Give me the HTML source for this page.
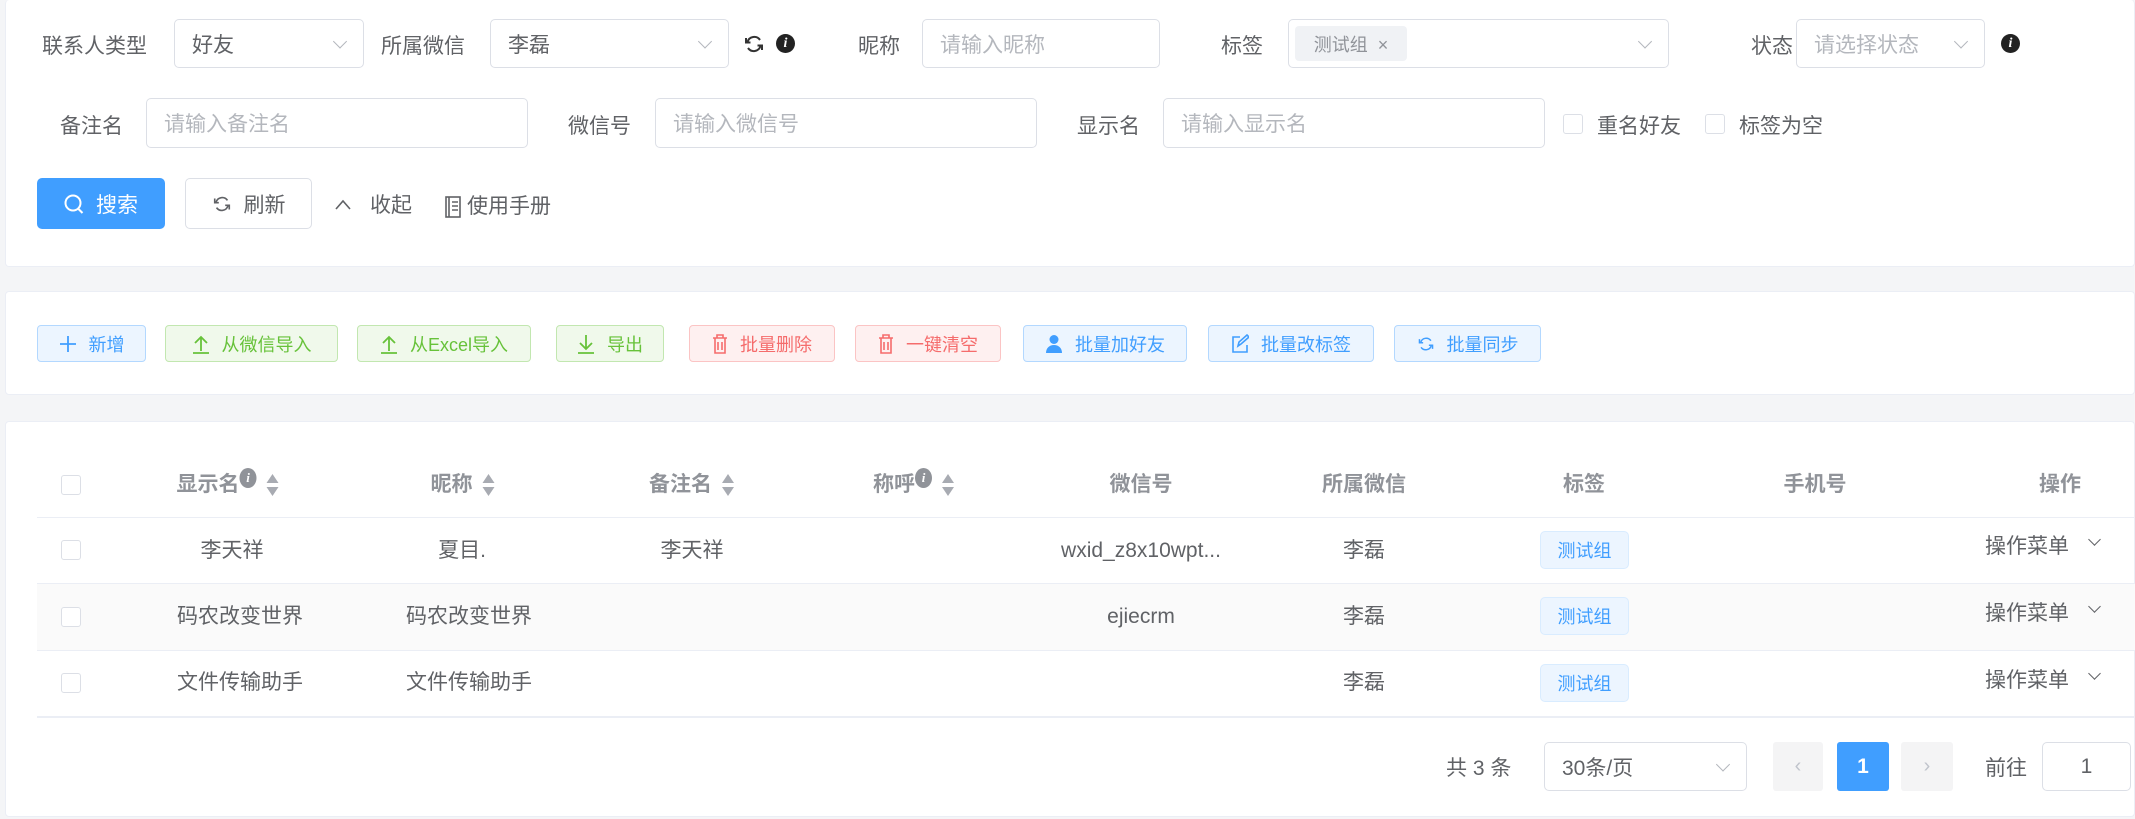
<!DOCTYPE html>
<html><head><meta charset="utf-8"><style>
*{box-sizing:border-box;margin:0;padding:0}
body{width:2135px;height:819px;background:#f4f5f7;font-family:"Liberation Sans","Noto Sans CJK SC",sans-serif;color:#606266;position:relative;overflow:hidden;font-size:20px}
.a{position:absolute}
.panel{position:absolute;background:#fff;left:5px;right:0;border:1px solid #ebeef5;border-radius:4px}
.lbl{position:absolute;font-size:21px;color:#606266;line-height:24px}
.inp{position:absolute;border:1px solid #dcdfe6;border-radius:5px;background:#fff;font-size:21px;color:#606266;padding-left:17px;display:flex;align-items:center}
.ph{color:#b4b7bd}
.chev{position:absolute;right:18px;top:50%;width:10px;height:10px;border-right:1.5px solid #b4b7bd;border-bottom:1.5px solid #b4b7bd;transform:translateY(-75%) rotate(45deg)}
.btn{position:absolute;top:325px;height:37px;border:1px solid;border-radius:4px;font-size:18px;display:flex;align-items:center;justify-content:center;gap:12px}
.pri{background:#ecf5ff;border-color:#b3d8ff;color:#409eff}
.suc{background:#f0f9eb;border-color:#c2e7b0;color:#67c23a}
.dan{background:#fef0f0;border-color:#fbc4c4;color:#f56c6c}
.cb{position:absolute;width:20px;height:20px;border:1px solid #dcdfe6;border-radius:3px;background:#fff}
.th{position:absolute;font-weight:bold;color:#909399;font-size:21px;transform:translateX(-50%);white-space:nowrap;top:472px;line-height:26px}
.td{position:absolute;font-size:21px;color:#606266;transform:translateX(-50%);white-space:nowrap;line-height:26px}
.line{position:absolute;left:37px;right:0;height:1px;background:#ebeef5}
.tag{position:absolute;left:1540px;width:89px;height:38px;background:#ecf5ff;border:1px solid #d9ecff;border-radius:5px;color:#409eff;font-size:18px;display:flex;align-items:center;justify-content:center}
.sort{display:inline-block;vertical-align:middle;margin-left:9px;width:14px;height:24px;position:relative}
.sort:before{content:"";position:absolute;left:1px;top:1px;border:6px solid transparent;border-bottom:9px solid #a8abb2;border-top:0}
.sort:after{content:"";position:absolute;left:1px;bottom:1px;border:6px solid transparent;border-top:9px solid #a8abb2;border-bottom:0}
.info{display:inline-block;width:19px;height:19px;border-radius:50%;background:#222;color:#fff;font:italic bold 14px "Liberation Serif",serif;text-align:center;line-height:19px}
.hinfo{display:inline-block;width:17px;height:20px;border-radius:50%;background:#909399;color:#fff;font:italic bold 13px "Liberation Serif",serif;text-align:center;line-height:20px;vertical-align:top;margin-top:-4px}
.op{position:absolute;left:1985px;font-size:21px;color:#606266}
.opc{position:absolute;left:2090px;width:9px;height:9px;border-right:1.5px solid #606266;border-bottom:1.5px solid #606266;transform:rotate(45deg)}
</style></head><body>

<div class="panel" style="top:0;height:267px;border-top:none"></div>
<div class="lbl" style="left:42px;top:35px">联系人类型</div>
<div class="inp" style="left:174px;top:19px;width:190px;height:49px">好友<span class="chev"></span></div>
<div class="lbl" style="left:381px;top:35px">所属微信</div>
<div class="inp" style="left:490px;top:19px;width:239px;height:49px">李磊<span class="chev"></span></div>
<svg class="a" style="left:743px;top:33px" width="22" height="22" viewBox="0 0 22 22" fill="none" stroke="#333" stroke-width="2"><path d="M17 7A7 7 0 0 0 4.5 9M5 15a7 7 0 0 0 12.5-2"/><path d="M3 5v4.5h4.5M19 17v-4.5h-4.5"/></svg>
<span class="info a" style="left:776px;top:34px">i</span>
<div class="lbl" style="left:858px;top:35px">昵称</div>
<div class="inp" style="left:922px;top:19px;width:238px;height:49px"><span class="ph">请输入昵称</span></div>
<div class="lbl" style="left:1221px;top:35px">标签</div>
<div class="inp" style="left:1288px;top:19px;width:381px;height:49px;padding-left:6px"><span style="background:#f0f2f5;color:#909399;font-size:18px;height:35px;width:112px;display:flex;align-items:center;justify-content:center;border-radius:4px">测试组&nbsp;&nbsp;×</span><span class="chev"></span></div>
<div class="lbl" style="left:1751px;top:35px">状态</div>
<div class="inp" style="left:1796px;top:19px;width:189px;height:49px"><span class="ph">请选择状态</span><span class="chev"></span></div>
<span class="info a" style="left:2001px;top:34px">i</span>

<div class="lbl" style="left:60px;top:115px">备注名</div>
<div class="inp" style="left:146px;top:98px;width:382px;height:50px"><span class="ph">请输入备注名</span></div>
<div class="lbl" style="left:568px;top:115px">微信号</div>
<div class="inp" style="left:655px;top:98px;width:382px;height:50px"><span class="ph">请输入微信号</span></div>
<div class="lbl" style="left:1077px;top:115px">显示名</div>
<div class="inp" style="left:1163px;top:98px;width:382px;height:50px"><span class="ph">请输入显示名</span></div>
<div class="cb" style="left:1563px;top:114px"></div><div class="lbl" style="left:1597px;top:115px">重名好友</div>
<div class="cb" style="left:1705px;top:114px"></div><div class="lbl" style="left:1739px;top:115px">标签为空</div>

<div class="a" style="left:37px;top:178px;width:128px;height:51px;background:#409eff;border-radius:5px;color:#fff;font-size:21px;display:flex;align-items:center;justify-content:center;gap:12px"><svg width="20" height="22" viewBox="0 0 20 22" fill="none" stroke="#fff" stroke-width="2"><circle cx="9" cy="10" r="7.5"/><path d="M14.5 16l4 4"/></svg>搜索</div>
<div class="a" style="left:185px;top:178px;width:127px;height:51px;border:1px solid #dcdfe6;border-radius:5px;background:#fff;font-size:21px;display:flex;align-items:center;justify-content:center;gap:12px"><svg width="20" height="20" viewBox="0 0 22 22" fill="none" stroke="#606266" stroke-width="1.8"><path d="M17 7A7 7 0 0 0 4.5 9M5 15a7 7 0 0 0 12.5-2"/><path d="M3 5v4.5h4.5M19 17v-4.5h-4.5"/></svg>刷新</div>
<svg class="a" style="left:335px;top:199px" width="16" height="12" viewBox="0 0 16 12" fill="none" stroke="#606266" stroke-width="1.6"><path d="M1 10l7-8 7 8"/></svg>
<div class="lbl" style="left:370px;top:194px">收起</div>
<svg class="a" style="left:445px;top:196px" width="16" height="22" viewBox="0 0 16 22" fill="none" stroke="#606266" stroke-width="1.6"><rect x="1" y="1" width="14" height="20"/><path d="M4 1v20M7 6h6M7 10h6M7 14h6"/></svg>
<div class="lbl" style="left:467px;top:195px">使用手册</div>

<div class="panel" style="top:291px;height:104px"></div>
<div class="btn pri" style="left:37px;width:109px"><svg width="18" height="18" viewBox="0 0 18 18" stroke="#409eff" stroke-width="1.8"><path d="M9 1v16M1 9h16"/></svg>新增</div>
<div class="btn suc" style="left:165px;width:173px"><svg width="18" height="20" viewBox="0 0 18 20" fill="none" stroke="#67c23a" stroke-width="1.8"><path d="M9 17V3M3 9l6-6 6 6M1 19h16"/></svg>从微信导入</div>
<div class="btn suc" style="left:357px;width:174px"><svg width="18" height="20" viewBox="0 0 18 20" fill="none" stroke="#67c23a" stroke-width="1.8"><path d="M9 17V3M3 9l6-6 6 6M1 19h16"/></svg>从Excel导入</div>
<div class="btn suc" style="left:556px;width:108px"><svg width="18" height="20" viewBox="0 0 18 20" fill="none" stroke="#67c23a" stroke-width="1.8"><path d="M9 1v14M3 9l6 6 6-6M1 19h16"/></svg>导出</div>
<div class="btn dan" style="left:689px;width:146px"><svg width="16" height="20" viewBox="0 0 16 20" fill="none" stroke="#f56c6c" stroke-width="1.6"><path d="M1 4h14M5 4V1h6v3M3 4v15h10V4M6 8v8M10 8v8"/></svg>批量删除</div>
<div class="btn dan" style="left:855px;width:146px"><svg width="16" height="20" viewBox="0 0 16 20" fill="none" stroke="#f56c6c" stroke-width="1.6"><path d="M1 4h14M5 4V1h6v3M3 4v15h10V4M6 8v8M10 8v8"/></svg>一键清空</div>
<div class="btn pri" style="left:1023px;width:164px"><svg width="18" height="20" viewBox="0 0 18 20" fill="#409eff"><circle cx="9" cy="5.5" r="4.5"/><path d="M1 19c0-5 3.5-8 8-8s8 3 8 8z"/></svg>批量加好友</div>
<div class="btn pri" style="left:1208px;width:166px"><svg width="18" height="20" viewBox="0 0 18 20" fill="none" stroke="#409eff" stroke-width="1.6"><path d="M9 3H2v15h14v-7M7 12l1-4 8-7 2 2-8 7z"/></svg>批量改标签</div>
<div class="btn pri" style="left:1394px;width:147px"><svg width="18" height="20" viewBox="0 0 22 22" fill="none" stroke="#409eff" stroke-width="1.8"><path d="M17 7A7 7 0 0 0 4.5 9M5 15a7 7 0 0 0 12.5-2"/><path d="M3 5v4.5h4.5M19 17v-4.5h-4.5"/></svg>批量同步</div>

<div class="panel" style="top:421px;height:396px"></div>
<div class="a" style="left:37px;top:584px;right:0;height:66px;background:#fafafa"></div>
<div class="line" style="top:517px"></div>
<div class="line" style="top:583px"></div>
<div class="line" style="top:650px"></div>
<div class="line" style="top:716px;height:2px"></div>

<div class="cb" style="left:61px;top:475px"></div>
<div class="cb" style="left:61px;top:540px"></div>
<div class="cb" style="left:61px;top:607px"></div>
<div class="cb" style="left:61px;top:673px"></div>

<div class="th" style="left:228px">显示名<span class="hinfo">i</span><span class="sort"></span></div>
<div class="th" style="left:463px">昵称<span class="sort"></span></div>
<div class="th" style="left:692px">备注名<span class="sort"></span></div>
<div class="th" style="left:914px">称呼<span class="hinfo">i</span><span class="sort"></span></div>
<div class="th" style="left:1141px">微信号</div>
<div class="th" style="left:1364px">所属微信</div>
<div class="th" style="left:1584px">标签</div>
<div class="th" style="left:1815px">手机号</div>
<div class="th" style="left:2060px">操作</div>

<div class="td" style="left:232px;top:538px">李天祥</div>
<div class="td" style="left:462px;top:538px">夏目.</div>
<div class="td" style="left:692px;top:538px">李天祥</div>
<div class="td" style="left:1141px;top:538px">wxid_z8x10wpt...</div>
<div class="td" style="left:1364px;top:538px">李磊</div>
<div class="tag" style="top:531px">测试组</div>
<div class="op" style="top:530px">操作菜单</div><div class="opc" style="top:535px"></div>

<div class="td" style="left:240px;top:604px">码农改变世界</div>
<div class="td" style="left:469px;top:604px">码农改变世界</div>
<div class="td" style="left:1141px;top:604px">ejiecrm</div>
<div class="td" style="left:1364px;top:604px">李磊</div>
<div class="tag" style="top:597px">测试组</div>
<div class="op" style="top:597px">操作菜单</div><div class="opc" style="top:602px"></div>

<div class="td" style="left:240px;top:670px">文件传输助手</div>
<div class="td" style="left:469px;top:670px">文件传输助手</div>
<div class="td" style="left:1364px;top:670px">李磊</div>
<div class="tag" style="top:664px">测试组</div>
<div class="op" style="top:664px">操作菜单</div><div class="opc" style="top:669px"></div>

<div class="lbl" style="left:1446px;top:757px">共 3 条</div>
<div class="inp" style="left:1544px;top:742px;width:203px;height:49px">30条/页<span class="chev"></span></div>
<div class="a" style="left:1773px;top:742px;width:50px;height:49px;background:#f4f4f5;border-radius:3px;color:#c0c4cc;text-align:center;line-height:49px;font-size:20px">‹</div>
<div class="a" style="left:1837px;top:742px;width:52px;height:49px;background:#409eff;border-radius:3px;color:#fff;text-align:center;line-height:49px;font-size:21px;font-weight:bold">1</div>
<div class="a" style="left:1901px;top:742px;width:52px;height:49px;background:#f4f4f5;border-radius:3px;color:#c0c4cc;text-align:center;line-height:49px;font-size:20px">›</div>
<div class="lbl" style="left:1985px;top:757px">前往</div>
<div class="inp" style="left:2042px;top:742px;width:89px;height:49px;padding:0;justify-content:center">1</div>
</body></html>
